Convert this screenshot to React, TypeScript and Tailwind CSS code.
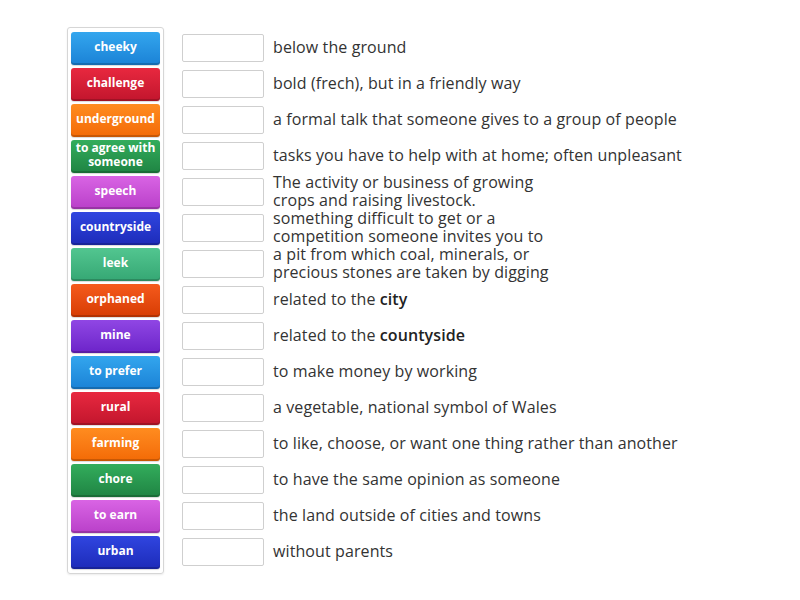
import React from "react";

type Tile = { label: string; bg: string };

const tiles: Tile[] = [
  { label: "cheeky", bg: "bg-gradient-to-b from-[#33a6ee] to-[#1b82d6]" },
  { label: "challenge", bg: "bg-gradient-to-b from-[#e8283f] to-[#c2152d]" },
  { label: "underground", bg: "bg-gradient-to-b from-[#ff8c1f] to-[#f36a05]" },
  { label: "to agree with someone", bg: "bg-gradient-to-b from-[#33ad5c] to-[#1f8443]" },
  { label: "speech", bg: "bg-gradient-to-b from-[#d964e4] to-[#b93fc9]" },
  { label: "countryside", bg: "bg-gradient-to-b from-[#3045e0] to-[#1d2bb9]" },
  { label: "leek", bg: "bg-gradient-to-b from-[#52c690] to-[#35a774]" },
  { label: "orphaned", bg: "bg-gradient-to-b from-[#f55a1c] to-[#d73c02]" },
  { label: "mine", bg: "bg-gradient-to-b from-[#9046e4] to-[#6c22c9]" },
  { label: "to prefer", bg: "bg-gradient-to-b from-[#33a6ee] to-[#1b82d6]" },
  { label: "rural", bg: "bg-gradient-to-b from-[#e8283f] to-[#c2152d]" },
  { label: "farming", bg: "bg-gradient-to-b from-[#ff8c1f] to-[#f36a05]" },
  { label: "chore", bg: "bg-gradient-to-b from-[#33ad5c] to-[#1f8443]" },
  { label: "to earn", bg: "bg-gradient-to-b from-[#d964e4] to-[#b93fc9]" },
  { label: "urban", bg: "bg-gradient-to-b from-[#3045e0] to-[#1d2bb9]" },
];

const defs: React.ReactNode[] = [
  "below the ground",
  "bold (frech), but in a friendly way",
  "a formal talk that someone gives to a group of people",
  "tasks you have to help with at home; often unpleasant",
  <>The activity or business of growing<br />crops and raising livestock.</>,
  <>something difficult to get or a<br />competition someone invites you to</>,
  <>a pit from which coal, minerals, or<br />precious stones are taken by digging</>,
  <>related to the <b className="font-semibold text-[#222]">city</b></>,
  <>related to the <b className="font-semibold text-[#222]">countyside</b></>,
  "to make money by working",
  "a vegetable, national symbol of Wales",
  "to like, choose, or want one thing rather than another",
  "to have the same opinion as someone",
  "the land outside of cities and towns",
  "without parents",
];

export default function App() {
  return (
    <div
      className="w-[800px] h-[600px] bg-white flex items-start pl-[67px] pt-[27px]"
      style={{ fontFamily: '"Open Sans", "Liberation Sans", sans-serif' }}
    >
      <div className="flex flex-col gap-[3px] border border-[#d6d6d6] rounded-[3px] px-[3px] pt-[4px] pb-[4px] shadow-[0_1px_2px_rgba(0,0,0,0.08)]">
        {tiles.map((t) => (
          <div
            key={t.label}
            className={`${t.bg} w-[89px] h-[33px] rounded-[3px] flex items-center justify-center text-center text-white font-bold text-[12px] leading-[14px] px-[2px] pb-[3px] shadow-[inset_0_-2px_0_rgba(0,0,0,0.18),0_1px_1px_rgba(0,0,0,0.15)]`}
          >
            {t.label}
          </div>
        ))}
      </div>
      <div className="flex flex-col pt-[4px] ml-[18px]">
        {defs.map((d, i) => (
          <div key={i} className="h-[36px] flex items-center">
            <div className="w-[82px] h-[28px] border border-[#cfcfcf] rounded-[2px] bg-white shrink-0 -mt-[2px]" />
            <div className="ml-[9px] pb-[5px] text-[16px] leading-[18px] tracking-[0.1px] text-[#333] whitespace-nowrap">
              {d}
            </div>
          </div>
        ))}
      </div>
    </div>
  );
}
